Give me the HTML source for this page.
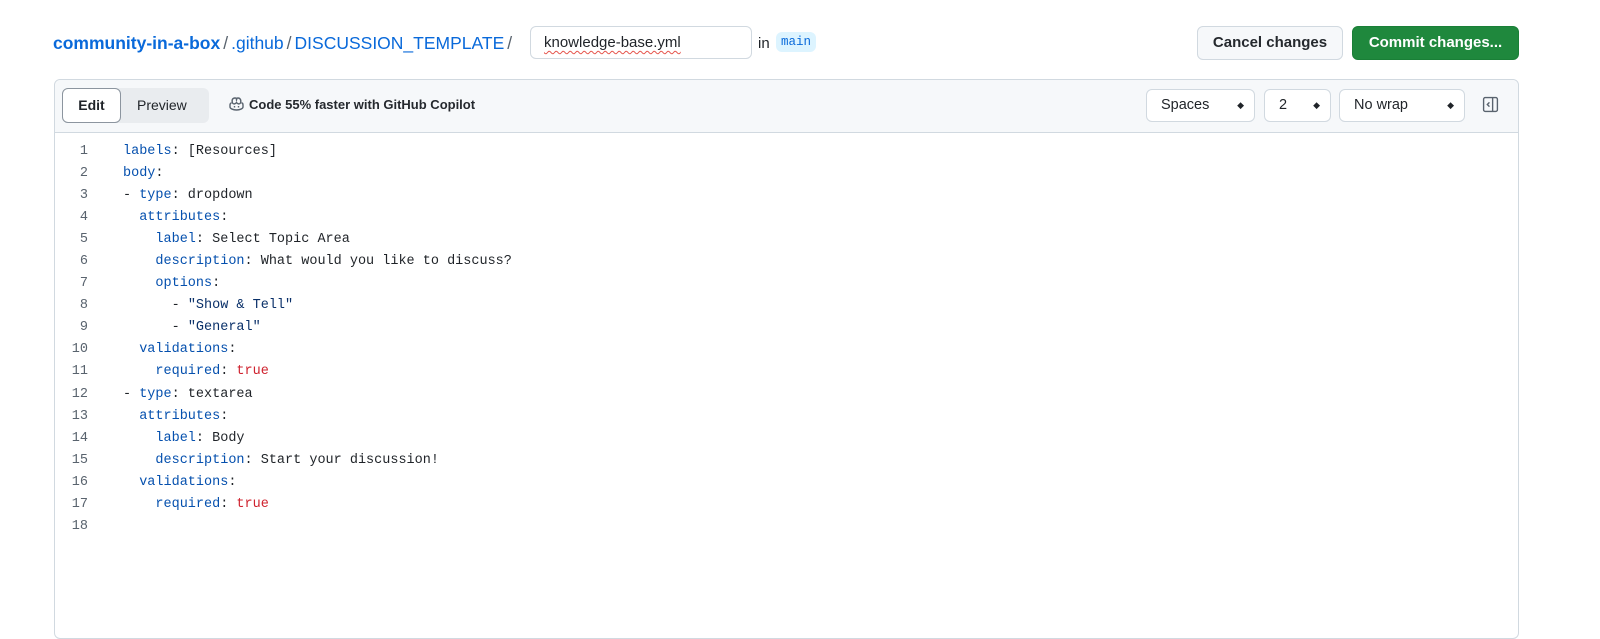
<!DOCTYPE html>
<html><head><style>
body{margin:0;width:1600px;height:610px;overflow:hidden;background:#fff;font-family:"Liberation Sans",sans-serif;color:#1f2328;position:relative}
.a{position:absolute}
.bc{left:53px;top:33px;font-size:17.5px;color:#0969da;white-space:nowrap}
.bc b{font-weight:700}
.bc .s{color:#59636e;margin:0 3px}
.fn{left:530px;top:26px;width:222px;height:33px;border:1px solid #d1d9e0;border-radius:6px;box-sizing:border-box;font-size:15px;padding:7px 13px;color:#1f2328}
.fn u{text-decoration:underline wavy #e5534b;text-decoration-thickness:1px;text-underline-offset:3px}
.in{left:758px;top:35px;font-size:15px}
.main{left:776px;top:32px;background:#ddf4ff;color:#0969da;font-family:"Liberation Mono",monospace;font-size:12.5px;padding:3px 5px;border-radius:6px}
.btn{top:26px;height:34px;border-radius:6px;box-sizing:border-box;font-size:15px;font-weight:700;text-align:center;line-height:32px}
.cancel{left:1197px;width:146px;background:#f6f8fa;border:1px solid #d1d9e0;color:#25292e}
.commit{left:1352px;width:167px;background:#1f883d;border:1px solid #1a7f37;color:#fff}
.ed{left:54px;top:79px;width:1465px;height:560px;border:1px solid #d1d9e0;border-radius:6px;box-sizing:border-box}
.tb{left:55px;top:80px;width:1463px;height:52px;background:#f6f8fa;border-bottom:1px solid #d1d9e0;border-radius:6px 6px 0 0}
.tabs{left:62px;top:88px;width:147px;height:35px;background:#e9ecef;border-radius:6px}
.edit{left:62px;top:88px;width:59px;height:35px;background:#fff;border:1px solid #8c959f;border-radius:6px;box-sizing:border-box;font-size:14px;font-weight:600;text-align:center;line-height:33px}
.prev{left:137px;top:97px;font-size:14px}
.cop{left:228px;top:97px;font-size:13px;font-weight:600;color:#25292e}
.sel{top:89px;height:33px;border:1px solid #d1d9e0;border-radius:6px;background:#fff;box-sizing:border-box;font-size:14.5px;line-height:31px;padding-left:14px}
.sel i{position:absolute;right:10px;top:0;font-style:normal;font-size:9px;line-height:31px}
pre{margin:0;font-family:"Liberation Mono",monospace;font-size:13.5px;line-height:22.05px}
.ln{left:62px;top:141px;width:26px;text-align:right;color:#59636e}
.code{left:123px;top:141px;color:#1f2328}
.k{color:#0550ae}.t{color:#cf222e}.q{color:#0a3069}
</style></head><body>
<div class="a bc"><b>community-in-a-box</b><span class="s">/</span>.github<span class="s">/</span>DISCUSSION_TEMPLATE<span class="s">/</span></div>
<div class="a fn"><u>knowledge-base.yml</u></div>
<div class="a in">in</div>
<div class="a main">main</div>
<div class="a btn cancel">Cancel changes</div>
<div class="a btn commit">Commit changes...</div>
<div class="a ed"></div>
<div class="a tb"></div>
<div class="a tabs"></div>
<div class="a edit">Edit</div>
<div class="a prev">Preview</div>
<svg class="a" style="left:228px;top:96px" width="17" height="16" viewBox="0 0 16 16" fill="none" stroke="#59636e" stroke-width="1.4"><path d="M3 7c-1 0-1.5 1-1.5 2v2c0 1.5 3 3 6.5 3s6.5-1.5 6.5-3V9c0-1-.5-2-1.5-2"/><path d="M4 7c-1-3 0-5 2.5-5S8 4 8 4s-.5-2 1.5-2S13 4 12 7c-1 1.5-3 1-4-.5C7 8 5 8.5 4 7z"/><path d="M6 10v1.5M10 10v1.5"/></svg>
<div class="a cop" style="left:249px">Code 55% faster with GitHub Copilot</div>
<div class="a sel" style="left:1146px;width:109px">Spaces<i>◆</i></div>
<div class="a sel" style="left:1264px;width:67px">2<i>◆</i></div>
<div class="a sel" style="left:1339px;width:126px">No wrap<i>◆</i></div>
<svg class="a" style="left:1482px;top:96px" width="17" height="17" viewBox="0 0 16 16" fill="none" stroke="#59636e" stroke-width="1.3"><rect x="1.5" y="1.5" width="13" height="13" rx="1.5"/><path d="M10 1.5v13M7 6l-2 2 2 2" /></svg>
<pre class="a ln">1
2
3
4
5
6
7
8
9
10
11
12
13
14
15
16
17
18</pre>
<pre class="a code"><span class="k">labels</span>: [Resources]
<span class="k">body</span>:
- <span class="k">type</span>: dropdown
  <span class="k">attributes</span>:
    <span class="k">label</span>: Select Topic Area
    <span class="k">description</span>: What would you like to discuss?
    <span class="k">options</span>:
      - <span class="q">"Show &amp; Tell"</span>
      - <span class="q">"General"</span>
  <span class="k">validations</span>:
    <span class="k">required</span>: <span class="t">true</span>
- <span class="k">type</span>: textarea
  <span class="k">attributes</span>:
    <span class="k">label</span>: Body
    <span class="k">description</span>: Start your discussion!
  <span class="k">validations</span>:
    <span class="k">required</span>: <span class="t">true</span>
</pre>
</body></html>
